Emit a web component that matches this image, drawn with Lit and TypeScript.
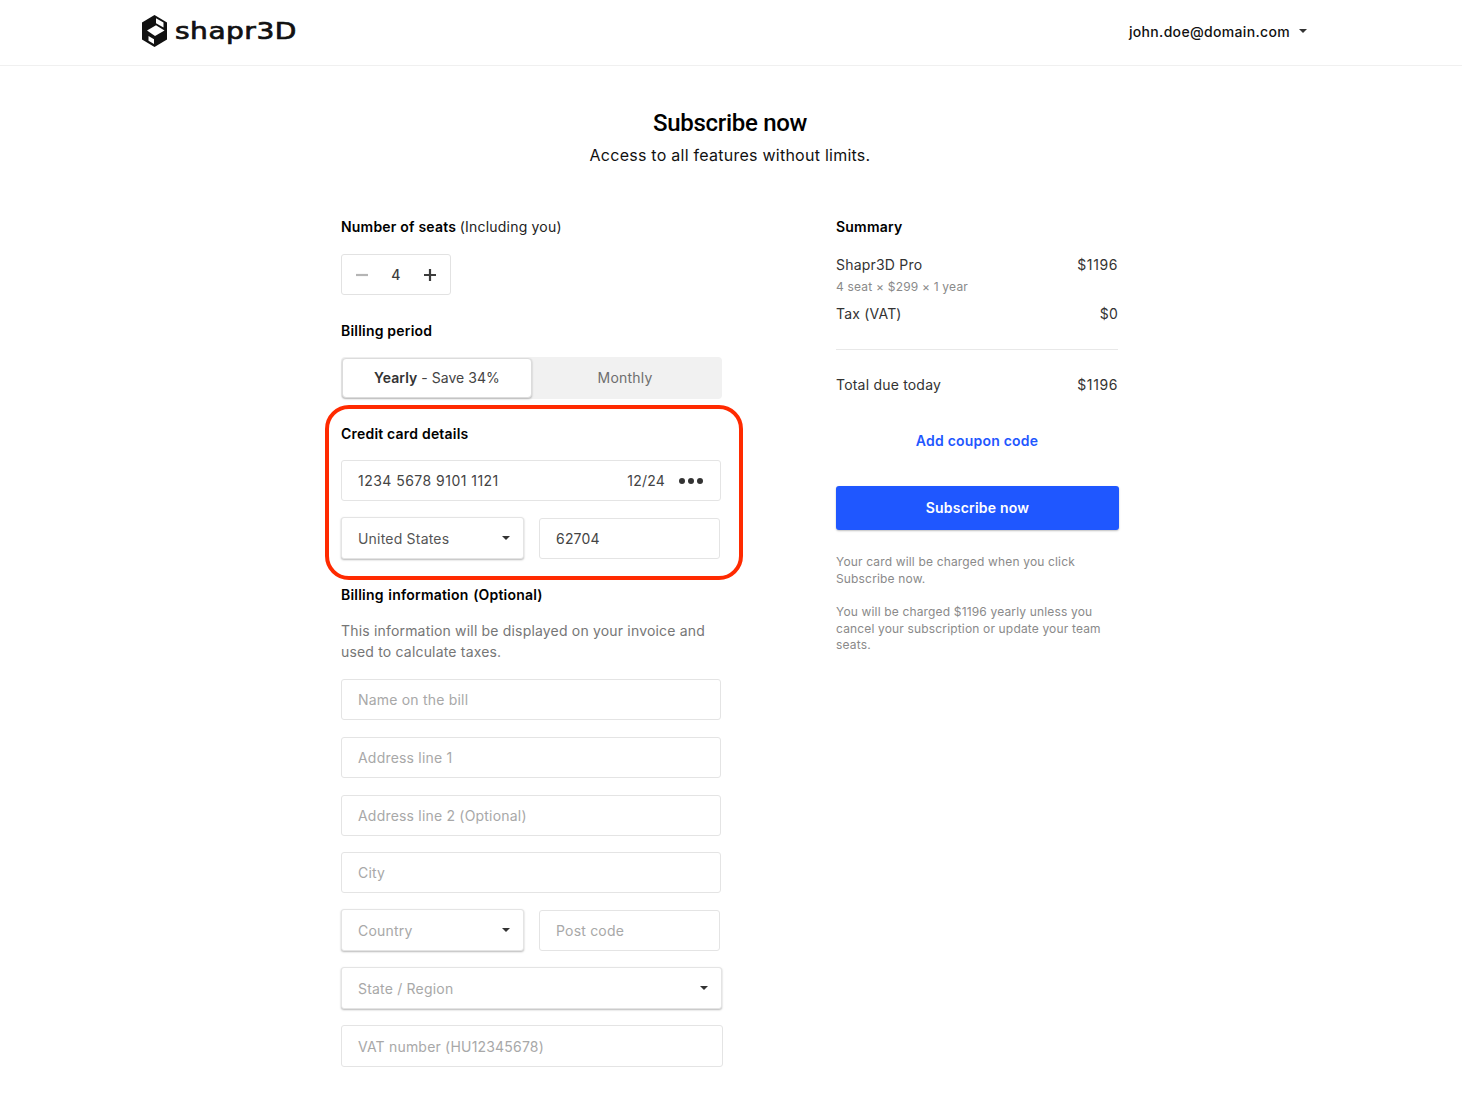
import { LitElement, css, html } from 'lit';
import { customElement } from 'lit/decorators.js';

@customElement('app-root')
export class AppRoot extends LitElement {
  static styles = css`
    :host {
      display: block;
      height: 1106px;
      overflow: hidden;
      background: #fff;
      font-family: Inter, "Liberation Sans", sans-serif;
      font-size: 14px;
      letter-spacing: 0.2px;
      color: #3c3c3c;
    }
    * { box-sizing: border-box; }

    .topbar {
      height: 66px;
      border-bottom: 1px solid #f0f0f0;
      padding: 0 155px 3px 142px;
      display: flex;
      align-items: center;
      justify-content: space-between;
    }
    .brand { display: flex; align-items: center; gap: 8px; height: 34px; }
    .wordmark {
      font-family: "DejaVu Sans", sans-serif;
      font-size: 23px;
      line-height: 30px;
      color: #111;
      letter-spacing: 0.4px;
      -webkit-text-stroke: 0.7px #111;
      transform: scaleX(1.22);
      transform-origin: left center;
    }
    .account { display: flex; align-items: center; gap: 9px; font-weight: 500; color: #111; font-size: 14px; letter-spacing: 0.33px; }
    .caret {
      width: 0; height: 0;
      border-left: 4px solid transparent;
      border-right: 4px solid transparent;
      border-top: 4px solid #333;
    }

    .intro { padding-top: 42px; text-align: center; }
    h1 {
      margin: 0;
      font-family: Roboto, sans-serif;
      font-weight: 500;
      font-size: 24px;
      line-height: 30px;
      letter-spacing: -0.3px;
      color: #000;
      padding-right: 2px;
    }
    .intro p { margin: 6px 0 0; font-size: 16px; line-height: 22px; color: #111; letter-spacing: 0.25px; padding-right: 2px; }

    .columns {
      display: flex;
      gap: 115px;
      padding: 51px 0 0 341px;
    }
    .form { width: 380px; position: relative; }
    .side { width: 282px; }

    .label { font-size: 14px; line-height: 20px; font-weight: 600; color: #000; }
    .label span { font-weight: 400; color: #222; }
    .m-seat { margin-top: 26px; }
    .m-card { margin-top: 25px; }
    .m-bill { margin-top: 26px; word-spacing: 1px; }

    .stepper {
      margin-top: 17px;
      width: 110px; height: 41px;
      border: 1px solid #e2e2e2;
      border-radius: 3px;
      display: flex;
      align-items: center;
      justify-content: space-between;
      padding: 0 13px;
      font-weight: 500;
      color: #3c3c3c;
    }
    .stepper svg { display: block; }

    .period {
      margin-top: 16px;
      height: 42px;
      background: #f1f1f1;
      border-radius: 4px;
      display: flex;
      align-items: center;
      width: 381px;
    }
    .period div { flex: 1; text-align: center; color: #6e6e6e; padding: 0 4px 1px 0; }
    .period .on {
      flex: none;
      width: 190px;
      height: 40px;
      line-height: 38px;
      padding: 0;
      margin-left: 1px;
      background: #fff;
      border: 1px solid #dcdcdc;
      border-radius: 4px;
      box-shadow: 0 1px 2px rgba(0, 0, 0, 0.25);
      color: #444;
      letter-spacing: 0.05px;
    }
    .period b { font-weight: 600; color: #333; }

    .stack { display: flex; flex-direction: column; gap: 17px; }
    .field {
      height: 41px;
      border: 1px solid #e4e4e4;
      border-radius: 3px;
      padding: 0 16px;
      display: flex;
      align-items: center;
      justify-content: space-between;
      color: #444;
      background: #fff;
      flex: none;
    }
    .field.ph { color: #a8a8a8; }
    .field.card { margin-top: 16px; }
    .field.vat { width: 382px; height: 42px; }
    .select {
      height: 42px;
      border: 1px solid #e4e4e4;
      border-radius: 3px;
      box-shadow: 0 1px 2px rgba(0, 0, 0, 0.28);
      padding: 0 13px 0 16px;
      display: flex;
      align-items: center;
      justify-content: space-between;
      color: #555;
      background: #fff;
    }
    .select.ph { color: #a8a8a8; }
    .select.wide { width: 381px; }
    .pair { display: grid; grid-template-columns: 183px 181px; gap: 15px; align-items: center; }
    .pair.first { margin-top: 16px; }
    .tight { margin-top: -1px; }
    .digits { letter-spacing: 0.47px; }
    .dots { display: flex; gap: 3px; }
    .dots i { width: 6px; height: 6px; border-radius: 50%; background: #333; }
    .card-end { display: flex; align-items: center; gap: 14px; padding-right: 1px; }

    .blurb { margin: 15px 0 17px; font-size: 14px; line-height: 21px; color: #767676; letter-spacing: 0.18px; }

    .callout {
      position: absolute;
      left: -16px; top: 188px;
      width: 418px; height: 175px;
      border: 4px solid #ff2a00;
      border-radius: 24px;
      pointer-events: none;
    }

    .line { display: flex; justify-content: space-between; line-height: 20px; color: #333; }
    .amount { letter-spacing: 0.6px; }
    .m-pro { margin-top: 18px; }
    .m-tax { margin-top: 9px; }
    .note { font-size: 12px; line-height: 16px; color: #8a8a8a; margin-top: 4px; }
    .rule { height: 1px; background: #e8e8e8; margin: 25px 0 25px; }
    .coupon { margin-top: 36px; text-align: center; color: #1f57ff; font-weight: 600; line-height: 20px; }
    .cta {
      margin-top: 35px;
      width: 283px;
      height: 44px;
      padding-bottom: 1px;
      background: #1f57ff;
      border-radius: 3px;
      box-shadow: 0 1px 2px rgba(0, 0, 0, 0.25);
      color: #fff;
      font-weight: 600;
      display: flex;
      align-items: center;
      justify-content: center;
    }
    .fine { margin: 24px 0 0; font-size: 12px; line-height: 16.5px; color: #8a8a8a; letter-spacing: 0.16px; }
    .fine + .fine { margin-top: 17px; }
  `;

  private caret() {
    return html`<span class="caret"></span>`;
  }

  render() {
    return html`
      <header class="topbar">
        <div class="brand">
          <svg width="25" height="32" viewBox="0 0 25 32" aria-hidden="true">
            <path fill="#111" d="M12.5 0 25 7.5V24.5L12.5 32 0 24.5V7.5Z" />
            <path fill="#fff" d="M14 3.2 21.5 7.5V12.5L14 8.2Z" />
            <path fill="#fff" d="M5 15.5 14 10.3 22.5 15.5 13 21Z" />
            <path fill="#fff" d="M6.5 21 12 24.2V29L6.5 25.8Z" />
          </svg>
          <span class="wordmark">shapr3D</span>
        </div>
        <div class="account">john.doe@domain.com ${this.caret()}</div>
      </header>

      <section class="intro">
        <h1>Subscribe now</h1>
        <p>Access to all features without limits.</p>
      </section>

      <main class="columns">
        <div class="form">
          <div class="label">Number of seats <span>(Including you)</span></div>
          <div class="stepper">
            <svg width="14" height="14" viewBox="0 0 14 14"><path d="M1 7h12" stroke="#b5b5b5" stroke-width="2.2" /></svg>
            <span>4</span>
            <svg width="14" height="14" viewBox="0 0 14 14"><path d="M1 7h12M7 1v12" stroke="#3c3c3c" stroke-width="2.2" /></svg>
          </div>

          <div class="label m-seat">Billing period</div>
          <div class="period">
            <div class="on"><b>Yearly</b> - Save 34%</div>
            <div>Monthly</div>
          </div>

          <div class="label m-card">Credit card details</div>
          <div class="field card">
            <span class="digits">1234 5678 9101 1121</span>
            <span class="card-end">12/24 <span class="dots"><i></i><i></i><i></i></span></span>
          </div>
          <div class="pair first">
            <div class="select">United States ${this.caret()}</div>
            <div class="field">62704</div>
          </div>

          <div class="label m-bill">Billing information (Optional)</div>
          <p class="blurb">This information will be displayed on your invoice and used to calculate taxes.</p>

          <div class="stack">
            <div class="field ph">Name on the bill</div>
            <div class="field ph">Address line 1</div>
            <div class="field ph">Address line 2 (Optional)</div>
            <div class="field ph tight">City</div>
            <div class="pair tight">
              <div class="select ph">Country ${this.caret()}</div>
              <div class="field ph">Post code</div>
            </div>
            <div class="select ph wide tight">State / Region ${this.caret()}</div>
            <div class="field ph vat tight">VAT number (HU12345678)</div>
          </div>

          <div class="callout"></div>
        </div>

        <aside class="side">
          <div class="label">Summary</div>
          <div class="line m-pro"><span>Shapr3D Pro</span><span class="amount">$1196</span></div>
          <div class="note">4 seat × $299 × 1 year</div>
          <div class="line m-tax"><span>Tax (VAT)</span><span>$0</span></div>
          <div class="rule"></div>
          <div class="line"><span>Total due today</span><span class="amount">$1196</span></div>
          <div class="coupon">Add coupon code</div>
          <div class="cta">Subscribe now</div>
          <p class="fine">Your card will be charged when you click Subscribe now.</p>
          <p class="fine">You will be charged $1196 yearly unless you cancel your subscription or update your team seats.</p>
        </aside>
      </main>
    `;
  }
}
